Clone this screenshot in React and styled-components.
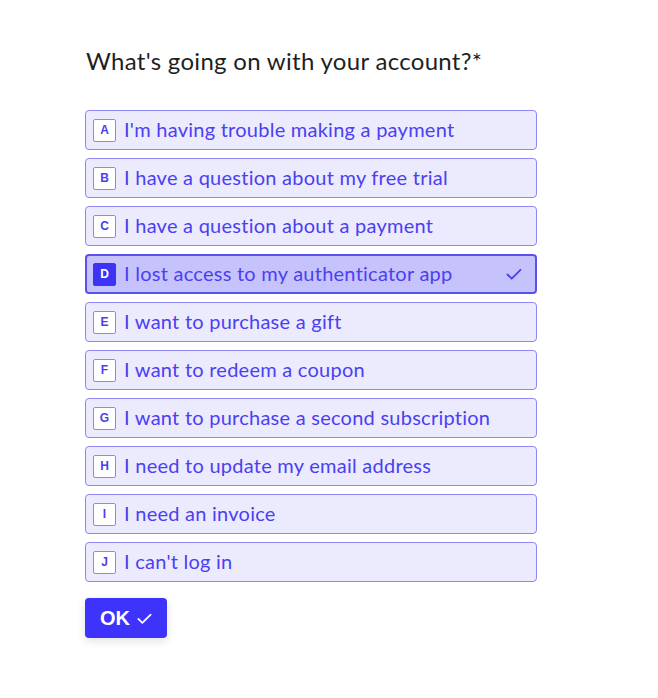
import React, { useState } from "react";
import styled, { createGlobalStyle } from "styled-components";

const GlobalStyle = createGlobalStyle`
  * { box-sizing: border-box; }
  body {
    margin: 0;
    background: #fff;
    font-family: Lato, "Noto Sans", sans-serif;
  }
`;

const Page = styled.div`
  padding: 45px 0 0 85px;
  width: 658px;
  height: 698px;
`;

const Question = styled.h1`
  margin: 0 0 33px 1px;
  font-size: 24px;
  font-weight: 400;
  letter-spacing: 0.3px;
  color: #1f1f1f;
  line-height: 32px;
`;

const OptionList = styled.div`
  display: flex;
  flex-direction: column;
  gap: 8px;
  width: 452px;
`;

const Option = styled.button`
  display: flex;
  align-items: center;
  gap: 8px;
  height: 40px;
  padding: 0 12px 0 ${(p) => (p.$selected ? "6px" : "7px")};
  border: ${(p) => (p.$selected ? "2px solid #5a50f0" : "1px solid #8c86f7")};
  border-radius: 4px;
  background: ${(p) => (p.$selected ? "#c6c3fc" : "#ecebfe")};
  color: #4b40f0;
  font-family: inherit;
  font-size: 20px;
  letter-spacing: 0.25px;
  text-align: left;
  cursor: pointer;
`;

const Key = styled.span`
  display: flex;
  align-items: center;
  justify-content: center;
  flex: none;
  width: 23px;
  height: 23px;
  border: 1px solid ${(p) => (p.$selected ? "#3d33f5" : "#8c86f7")};
  border-radius: 2px;
  background: ${(p) => (p.$selected ? "#3d33f5" : "#fff")};
  color: ${(p) => (p.$selected ? "#fff" : "#4b40f0")};
  font-family: "Liberation Sans", Arial, sans-serif;
  font-size: 12px;
  font-weight: 700;
  letter-spacing: 0;
`;

const Label = styled.span`
  flex: 1;
  line-height: 24px;
  padding-bottom: 2px;
`;

const Check = styled.svg`
  flex: none;
`;

const OkButton = styled.button`
  display: flex;
  align-items: center;
  gap: 6px;
  margin-top: 16px;
  height: 40px;
  padding: 0 14px 0 15px;
  border: none;
  border-radius: 4px;
  background: #3d33fb;
  color: #fff;
  font-family: "Liberation Sans", Arial, sans-serif;
  font-size: 20px;
  font-weight: 700;
  box-shadow: 0 3px 10px rgba(0, 0, 0, 0.12);
  cursor: pointer;
`;

const options = [
  "I'm having trouble making a payment",
  "I have a question about my free trial",
  "I have a question about a payment",
  "I lost access to my authenticator app",
  "I want to purchase a gift",
  "I want to redeem a coupon",
  "I want to purchase a second subscription",
  "I need to update my email address",
  "I need an invoice",
  "I can't log in",
];

const CheckIcon = ({ color, size = 18 }) => (
  <Check viewBox="0 0 18 18" width={size} height={size}>
    <path
      d="M2.5 9.5l4.2 4.2L15.5 4.8"
      fill="none"
      stroke={color}
      strokeWidth="1.8"
      strokeLinecap="round"
      strokeLinejoin="round"
    />
  </Check>
);

const App = () => {
  const [selected, setSelected] = useState(3);

  return (
    <Page>
      <GlobalStyle />
      <Question>What's going on with your account?*</Question>
      <OptionList>
        {options.map((text, i) => (
          <Option key={text} $selected={selected === i} onClick={() => setSelected(i)}>
            <Key $selected={selected === i}>{String.fromCharCode(65 + i)}</Key>
            <Label>{text}</Label>
            {selected === i && <CheckIcon color="#4b40f0" />}
          </Option>
        ))}
      </OptionList>
      <OkButton>
        OK <CheckIcon color="#fff" size={17} />
      </OkButton>
    </Page>
  );
};

export default App;
